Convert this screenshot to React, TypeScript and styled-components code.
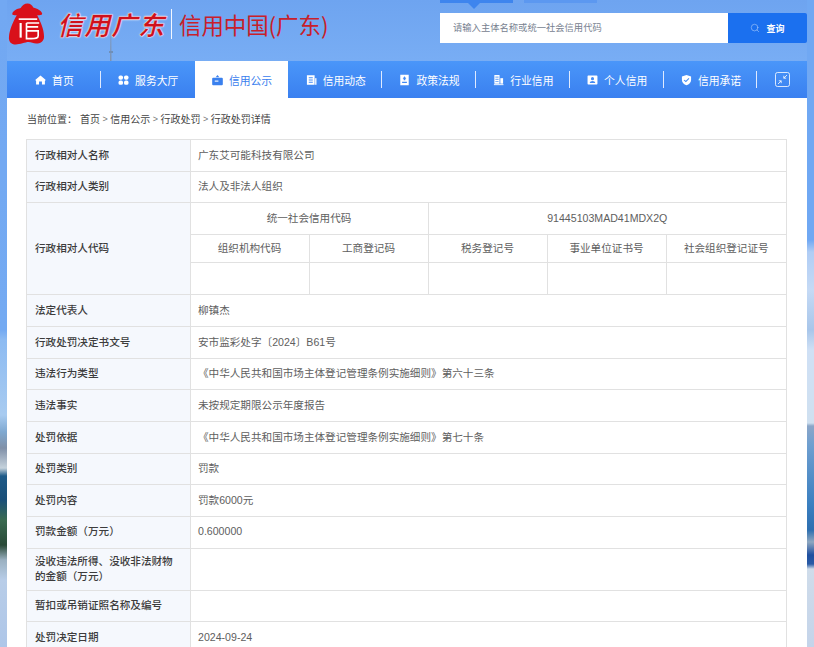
import React from "react";
import styled, { createGlobalStyle } from "styled-components";
import { Search } from "lucide-react";

const GlobalStyle = createGlobalStyle`
  html, body {
    margin: 0;
    padding: 0;
    background: #fff;
  }
  * {
    box-sizing: border-box;
  }
`;

const Page = styled.div`
  width: 814px;
  height: 647px;
  overflow: hidden;
  padding: 0 7px;
  font-family: "Liberation Sans", "Noto Sans CJK SC", sans-serif;
  background:
    linear-gradient(
        #72a8f2 0, #74aaf2 330px, #8dbbf2 340px, #a8cbf0 415px, #7fa8d0 432px, #8090a8 448px,
        #c5d2dc 468px, #1e5a88 476px, #1a4f78 500px, #3a6a50 520px, #2a4a38 545px, #9ab0c0 560px,
        #b8cde8 580px, #aec6e8 647px
      )
      left top / 7px 100% no-repeat,
    linear-gradient(
        #70a8f3 0, #70a8f3 240px, #b0cdf5 252px, #c5daf5 290px, #a8c6ea 330px, #cfe0f5 350px,
        #cfe0f0 423px, #8ba6c8 426px, #6f9fd0 445px, #3a7fc0 505px, #2e6fb0 530px, #8fa7c0 542px,
        #1f4fa0 555px, #2a5ba5 564px, #cfdcea 569px, #c4d4ea 647px
      )
      right top / 7px 100% no-repeat,
    linear-gradient(#6f8fb8, #6f8fb8) 109px 51px / 4px 2px no-repeat,
    linear-gradient(rgba(120, 140, 170, 0.15), #7f93b0) 110px 22px / 1.5px 39px no-repeat,
    linear-gradient(#6ea4f0, #78adf4 60px, #72a8f2 100px);
`;

const Header = styled.header`
  height: 61px;
  display: flex;
  justify-content: space-between;
`;

const Brand = styled.div`
  display: flex;
  align-items: center;
  height: 47px;
`;

const Calligraphy = styled.span`
  margin-left: 12px;
  font-family: "Noto Sans CJK SC", sans-serif;
  font-size: 26px;
  font-weight: 700;
  font-style: italic;
  letter-spacing: 1px;
  color: #cf101c;
  -webkit-text-stroke: 0.3px #fff;
  text-shadow: 0 0 2px #fff;
`;

const BrandRule = styled.span`
  width: 1px;
  height: 30px;
  margin: 0 7px 0 6px;
  background: #f3f7ff;
`;

const BrandName = styled.span`
  font-family: "Noto Sans CJK SC", sans-serif;
  font-size: 22.5px;
  line-height: 30px;
  color: #c8202a;
  letter-spacing: -0.1px;
  white-space: nowrap;
`;

const SearchBlock = styled.div`
  width: 367px;
`;

const SearchTabs = styled.div`
  display: flex;
  gap: 11px;
  height: 13px;
`;

const SearchTab = styled.div<{ $active?: boolean }>`
  position: relative;
  width: 73px;
  height: 3px;
  background: ${({ $active }) => ($active ? "#3e85ee" : "#5c98f0")};

  ${({ $active }) =>
    $active &&
    `&::after {
      content: "";
      position: absolute;
      left: 28px;
      top: 3px;
      border-left: 6px solid transparent;
      border-right: 6px solid transparent;
      border-top: 6px solid #3e85ee;
    }`}
`;

const SearchBar = styled.form`
  display: flex;
  height: 30px;
  margin: 0;
`;

const SearchInput = styled.input`
  width: 288px;
  border: none;
  outline: none;
  padding: 0 13px;
  background: #fff;
  font-family: inherit;
  font-size: 9.3px;

  &::placeholder {
    color: #77818f;
    opacity: 1;
  }
`;

const SearchButton = styled.button`
  width: 79px;
  display: flex;
  align-items: center;
  justify-content: center;
  gap: 6px;
  border: none;
  border-radius: 0 2px 2px 0;
  padding: 0;
  background: #1b70ef;
  color: #fff;
  font-family: inherit;
  font-size: 9px;
  font-weight: 700;
  svg {
    opacity: 0.75;
  }
`;

const Nav = styled.nav`
  display: flex;
  height: 37px;
  background: linear-gradient(#4a96f9, #3a80f0);
`;

const NavItem = styled.div<{ $active?: boolean; $noRule?: boolean }>`
  position: relative;
  flex: 0 0 93.8px;
  display: flex;
  align-items: center;
  justify-content: center;
  gap: 6px;
  padding-left: 1px;
  font-size: 10.8px;
  color: ${({ $active }) => ($active ? "#3a80ee" : "#fff")};
  background: ${({ $active }) => ($active ? "#fff" : "transparent")};

  &::after {
    content: "";
    display: ${({ $noRule }) => ($noRule ? "none" : "block")};
    position: absolute;
    right: 0;
    top: 10px;
    width: 1px;
    height: 17px;
    background: #dfeaff;
  }
`;

const NavExtra = styled.div`
  flex: 1;
  display: flex;
  align-items: center;
  justify-content: center;
`;

const Content = styled.main`
  background: #fff;
  padding: 0 20px;
  height: 549px;
`;

const Breadcrumb = styled.div`
  height: 41px;
  display: flex;
  align-items: center;
  font-size: 10px;
  color: #444;
  white-space: nowrap;
`;

const CrumbLabel = styled.span`
  margin-right: 3px;
`;

const CrumbArrow = styled.span`
  margin: 0 2.5px;
  font-size: 9px;
  color: #777;
`;

const DetailTable = styled.table`
  width: 760px;
  margin-left: -1px;
  table-layout: fixed;
  border-collapse: collapse;
  font-size: 10.6px;
  line-height: 14.5px;
`;

const LabelCell = styled.th`
  width: 163.5px;
  padding: 0 8px 1px;
  border: 1px solid #e1e1e1;
  background: #f5f8fd;
  color: #3c3c3c;
  font-weight: 500;
  text-align: left;
`;

const ValueCell = styled.td`
  padding: 0 7.5px 1px;
  border: 1px solid #e1e1e1;
  color: #5e5e5e;
`;

const SubCell = styled.td`
  padding: 0 0 1px;
  border: 1px solid #e1e1e1;
  color: #5e5e5e;
  text-align: center;
`;

const Row = styled.tr<{ $height?: number }>`
  height: ${({ $height }) => $height ?? 31.67}px;
`;

const NavSvg = styled.svg`
  width: 11px;
  height: 12px;
  flex: none;
  fill: currentColor;
`;

const HomeIcon = () => (
  <NavSvg viewBox="0 0 12 12">
    <path d="M6 1 11.500 5.800C11.500 6.500 11.200 7 10.800 7V11H7.600V7.600H4.400V11H1.200V7C.8 7 .5 6.500.5 5.800Z" />
  </NavSvg>
);

const HallIcon = () => (
  <NavSvg viewBox="0 0 12 12">
    <rect x="0.5" y="1" width="5" height="4.6" rx="2" />
    <rect x="6.5" y="1" width="5" height="4.6" rx="2" />
    <rect x="0.5" y="6.6" width="5" height="4.6" rx="2" />
    <rect x="6.5" y="6.6" width="5" height="4.6" rx="2" />
  </NavSvg>
);

const NoticeIcon = () => (
  <NavSvg viewBox="0 0 12 12">
    <path d="M6 .6 8 3H4Z" />
    <path d="M1.200 3.600h9.600a1 1 0 0 1 1 1v6a1 1 0 0 1-1 1H1.200a1 1 0 0 1-1-1v-6a1 1 0 0 1 1-1Z" />
    <rect x="3" y="6.6" width="4" height="1.2" fill="#fff" />
  </NavSvg>
);

const NewsIcon = () => (
  <NavSvg viewBox="0 0 12 12">
    <path
      fillRule="evenodd"
      d="M1 .8h8.400v10.400H1ZM3 3v1.200h4.400V3Zm0 2.400v1.200h4.400V5.400Zm0 2.400V9h4.400V7.800Z"
    />
    <rect x="10" y="4" width="1.4" height="7.2" />
  </NavSvg>
);

const PolicyIcon = () => (
  <NavSvg viewBox="0 0 12 12">
    <path
      fillRule="evenodd"
      d="M1.400.4h9.200v11.200H1.400ZM6 2 4 4.600h1.100V6.400h1.800V4.600H8ZM3.400 8v1.200h5.200V8Z"
    />
  </NavSvg>
);

const IndustryIcon = () => (
  <NavSvg viewBox="0 0 12 12">
    <path
      fillRule="evenodd"
      d="M1.500.6h5.600V10H1.500ZM2.800 2.200v1.300h1.200V2.200Zm1.900 0v1.300h1.200V2.200ZM2.800 4.600v1.300h1.200V4.600Zm1.900 0v1.300h1.200V4.600ZM2.800 7v1.300h1.200V7Zm1.900 0v1.300h1.200V7Z"
    />
    <rect x="8" y="4" width="3" height="6" />
    <rect x="1" y="10.6" width="10.4" height="1" />
  </NavSvg>
);

const PersonIcon = () => (
  <NavSvg viewBox="0 0 12 12">
    <path
      fillRule="evenodd"
      d="M1.400 1h9.200a.8.8 0 0 1 .8.8v8.400a.8.8 0 0 1-.8.8H1.400a.8.8 0 0 1-.8-.8V1.800a.8.8 0 0 1 .8-.8ZM6 2.800a1.700 1.700 0 1 0 0 3.400 1.700 1.700 0 0 0 0-3.400ZM3 9.400h6C9 7.900 7.600 7 6 7S3 7.900 3 9.400Z"
    />
  </NavSvg>
);

const PromiseIcon = () => (
  <NavSvg viewBox="0 0 12 12">
    <path
      fillRule="evenodd"
      d="M6 .5 11 2.200V6c0 3-2.200 4.800-5 5.700C3.200 10.800 1 9 1 6V2.200ZM3.600 5.600 2.900 6.400 5.300 8.500 9.100 4.600 8.300 3.900 5.300 6.900Z"
    />
  </NavSvg>
);

const FullscreenSvg = styled.svg`
  width: 15px;
  height: 15px;
  fill: none;
  stroke: #fff;
  stroke-width: 0.8;
`;

const ExpandIcon = () => (
  <FullscreenSvg viewBox="0 0 15 15">
    <rect x="0.5" y="0.5" width="14" height="14" rx="2" />
    <path d="M12 3 8.800 6.200M8.800 3.800V6.200H11.200M3 12 6.200 8.800M3.800 8.800H6.200V11.200" />
  </FullscreenSvg>
);

const LogoSvg = styled.svg`
  width: 37px;
  height: 44px;
  flex: none;
  margin-left: 1px;
  margin-top: 1px;
`;

const Logo = () => (
  <LogoSvg viewBox="0 0 38 44">
    <path
      fill="#d9101a"
      d="M20 1c3 0 5 2 6 4 4 1 8 3 9 6 .5 1.500-1 2-3 2h-2c3 6 7 14 7 22 0 5-4 7-8 7-3 0-5-1.500-8-1.500S12 43 8 43C3 43 .5 40 1 35c.5-7 4-15 8-22H7c-2 0-3-.5-2.500-2C5.500 8 9 6.500 13 5.500 14.500 3 17 1 20 1Z"
    />
    <g stroke="#fff" strokeWidth="1.700" fill="none">
      <path d="M11 17H30" />
      <path d="M13 21V36" strokeWidth="2.200" />
      <path d="M19 21H32M19 25H31M19 29H31V34C31 37 28 37 24 37H19V21" />
    </g>
  </LogoSvg>
);

type NavEntry = {
  title: string;
  icon: React.ReactNode;
  active?: boolean;
  noRule?: boolean;
};

const navEntries: NavEntry[] = [
  { title: "首页", icon: <HomeIcon /> },
  { title: "服务大厅", icon: <HallIcon />, noRule: true },
  { title: "信用公示", icon: <NoticeIcon />, active: true, noRule: true },
  { title: "信用动态", icon: <NewsIcon /> },
  { title: "政策法规", icon: <PolicyIcon /> },
  { title: "行业信用", icon: <IndustryIcon /> },
  { title: "个人信用", icon: <PersonIcon /> },
  { title: "信用承诺", icon: <PromiseIcon /> },
];

const crumbs = ["首页", "信用公示", "行政处罚", "行政处罚详情"];

const lowerRows: { label: string; value: string; height?: number }[] = [
  { label: "法定代表人", value: "柳镇杰" },
  { label: "行政处罚决定书文号", value: "安市监彩处字〔2024〕B61号" },
  { label: "违法行为类型", value: "《中华人民共和国市场主体登记管理条例实施细则》第六十三条" },
  { label: "违法事实", value: "未按规定期限公示年度报告" },
  { label: "处罚依据", value: "《中华人民共和国市场主体登记管理条例实施细则》第七十条" },
  { label: "处罚类别", value: "罚款" },
  { label: "处罚内容", value: "罚款6000元" },
  { label: "罚款金额（万元）", value: "0.600000" },
  { label: "没收违法所得、没收非法财物的金额（万元）", value: "", height: 42 },
  { label: "暂扣或吊销证照名称及编号", value: "" },
  { label: "处罚决定日期", value: "2024-09-24" },
];

const subTitles = ["组织机构代码", "工商登记码", "税务登记号", "事业单位证书号", "社会组织登记证号"];

export default function App() {
  return (
    <Page>
      <GlobalStyle />
      <Header>
        <Brand>
          <Logo />
          <Calligraphy>信用广东</Calligraphy>
          <BrandRule />
          <BrandName>信用中国(广东)</BrandName>
        </Brand>
        <SearchBlock>
          <SearchTabs>
            <SearchTab $active />
            <SearchTab />
          </SearchTabs>
          <SearchBar>
            <SearchInput placeholder="请输入主体名称或统一社会信用代码" />
            <SearchButton type="button">
              <Search size={10} strokeWidth={1.2} />
              查询
            </SearchButton>
          </SearchBar>
        </SearchBlock>
      </Header>

      <Nav>
        {navEntries.map((item) => (
          <NavItem key={item.title} $active={item.active} $noRule={item.noRule}>
            {item.icon}
            {item.title}
          </NavItem>
        ))}
        <NavExtra>
          <ExpandIcon />
        </NavExtra>
      </Nav>

      <Content>
        <Breadcrumb>
          <CrumbLabel>当前位置：</CrumbLabel>
          {crumbs.map((crumb, i) => (
            <React.Fragment key={crumb}>
              {i > 0 && <CrumbArrow>&gt;</CrumbArrow>}
              {crumb}
            </React.Fragment>
          ))}
        </Breadcrumb>

        <DetailTable>
          <colgroup>
            <col style={{ width: 163.5 }} />
            <col style={{ width: 119 }} />
            <col style={{ width: 119 }} />
            <col style={{ width: 119 }} />
            <col style={{ width: 119 }} />
            <col style={{ width: 120.5 }} />
          </colgroup>
          <tbody>
            <Row>
              <LabelCell>行政相对人名称</LabelCell>
              <ValueCell colSpan={5}>广东艾可能科技有限公司</ValueCell>
            </Row>
            <Row>
              <LabelCell>行政相对人类别</LabelCell>
              <ValueCell colSpan={5}>法人及非法人组织</ValueCell>
            </Row>
            <Row $height={32}>
              <LabelCell rowSpan={3}>行政相对人代码</LabelCell>
              <SubCell colSpan={2}>统一社会信用代码</SubCell>
              <SubCell colSpan={3}>91445103MAD41MDX2Q</SubCell>
            </Row>
            <Row $height={28}>
              {subTitles.map((title) => (
                <SubCell key={title}>{title}</SubCell>
              ))}
            </Row>
            <Row $height={32}>
              {subTitles.map((title) => (
                <SubCell key={title} />
              ))}
            </Row>
            {lowerRows.map((row) => (
              <Row key={row.label} $height={row.height}>
                <LabelCell>{row.label}</LabelCell>
                <ValueCell colSpan={5}>{row.value}</ValueCell>
              </Row>
            ))}
          </tbody>
        </DetailTable>
      </Content>
    </Page>
  );
}
